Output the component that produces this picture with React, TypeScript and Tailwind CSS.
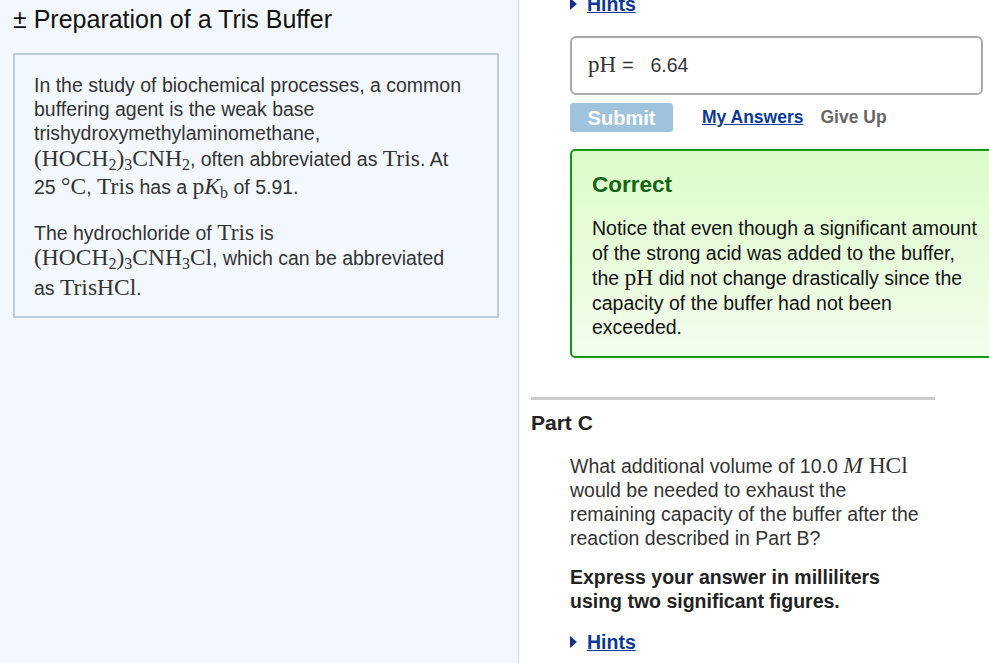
import { type ReactNode } from "react";

function M({ children }: { children: ReactNode }) {
	return <span className="whitespace-nowrap font-['Liberation_Serif',serif] text-[23.5px]">{children}</span>;
}

function Sub({ children }: { children: ReactNode }) {
	return <sub className="text-[16px]">{children}</sub>;
}

function HintsLink({ className = "" }: { className?: string }) {
	return (
		<div className={`flex items-center gap-[10px] ${className}`}>
			<svg width="7" height="12" viewBox="0 0 7 12">
				<path d="M0 0 L7 6 L0 12 Z" fill="#1c2c8c" />
			</svg>
			<a className="text-[19.5px] font-bold leading-[20px] text-[#0b3a96] underline" href="#">
				Hints
			</a>
		</div>
	);
}

export default function App() {
	return (
		<div className="flex h-[663px] w-[989px] overflow-hidden bg-white font-['Liberation_Sans',Arial,sans-serif]">
			<aside className="h-full w-[519px] shrink-0 border-r border-[#c8d8ea] bg-[#f3f8ff] pl-[13px]">
				<h1 className="pt-[4px] text-[25px] leading-[30px] text-[#111]">± Preparation of a Tris Buffer</h1>
				<div className="mt-[19px] w-[486px] border-2 border-[#bccfe1] pb-[12px] pl-[19px] pt-[19px] text-[19.5px] text-[#333]">
					<div className="flex flex-col">
						<span className="flex h-[24px] items-center whitespace-nowrap">In the study of biochemical processes, a common</span>
						<span className="flex h-[24px] items-center whitespace-nowrap">buffering agent is the weak base</span>
						<span className="flex h-[24px] items-center whitespace-nowrap">trishydroxymethylaminomethane,</span>
						<span className="h-[24px] whitespace-nowrap leading-[24px]">
							<M>
								(HOCH<Sub>2</Sub>)<Sub>3</Sub>CNH<Sub>2</Sub>
							</M>
							, often abbreviated as <M>Tris</M>. At
						</span>
						<span className="h-[32px] whitespace-nowrap leading-[32px]">
							25 <M>°C</M>, <M>Tris</M> has a{" "}
							<M>
								p<i>K</i>
								<Sub>b</Sub>
							</M>{" "}
							of 5.91.
						</span>
					</div>
					<div className="mt-[18px] flex flex-col">
						<span className="h-[24px] whitespace-nowrap leading-[24px]">
							The hydrochloride of <M>Tris</M> is
						</span>
						<span className="h-[26px] whitespace-nowrap leading-[26px]">
							<M>
								(HOCH<Sub>2</Sub>)<Sub>3</Sub>CNH<Sub>3</Sub>Cl
							</M>
							, which can be abbreviated
						</span>
						<span className="h-[34px] whitespace-nowrap leading-[34px]">
							as <M>TrisHCl</M>.
						</span>
					</div>
				</div>
			</aside>

			<main className="min-w-0 flex-1 pl-[12px]">
				<div className="pl-[39px]">
					<HintsLink className="-mt-[6px] h-[20px]" />
					<div className="mt-[22px] flex h-[59px] w-[413px] items-center rounded-[6px] border-2 border-[#aaaaaa] pl-[16px] text-[#333]">
						<span className="font-['Liberation_Serif',serif] text-[23px]">pH</span>
						<span className="ml-[6px] text-[19.5px]">=</span>
						<span className="ml-[17px] text-[19.5px]">6.64</span>
					</div>
					<div className="mt-[8px] flex items-center">
						<button
							type="button"
							className="h-[29px] w-[103px] rounded-[3px] bg-[#9fc3dd] text-[20px] font-bold text-white"
						>
							Submit
						</button>
						<a href="#" className="ml-[29px] text-[17.5px] font-bold text-[#0b3a96] underline">
							My Answers
						</a>
						<span className="ml-[17px] text-[17.5px] font-bold text-[#666]">Give Up</span>
					</div>
					<div className="mt-[17px] h-[209px] w-[440px] rounded-[5px] border-2 border-[#169816] bg-gradient-to-b from-[#dcfbc9] to-[#f3fdec] pl-[20px] pt-[20px]">
						<div className="text-[22.5px] font-bold leading-[28px] text-[#136413]">Correct</div>
						<p className="mt-[17px] whitespace-nowrap text-[19.5px] leading-[24.5px] text-[#111]">
							Notice that even though a significant amount
							<br />
							of the strong acid was added to the buffer,
							<br />
							the <M>pH</M> did not change drastically since the
							<br />
							capacity of the buffer had not been
							<br />
							exceeded.
						</p>
					</div>
				</div>

				<div className="mt-[39px] h-[3px] w-[404px] bg-[#cccccc]" />
				<h2 className="mt-[11px] text-[21px] font-bold leading-[24px] text-[#222]">Part C</h2>
				<div className="pl-[39px]">
					<p className="mt-[18px] whitespace-nowrap text-[19.5px] leading-[24px] text-[#333]">
						What additional volume of 10.0{" "}
						<M>
							<i>M</i> HCl
						</M>
						<br />
						would be needed to exhaust the
						<br />
						remaining capacity of the buffer after the
						<br />
						reaction described in Part B?
					</p>
					<p className="mt-[15px] whitespace-nowrap text-[19.5px] font-bold leading-[24px] text-[#222]">
						Express your answer in milliliters
						<br />
						using two significant figures.
					</p>
					<HintsLink className="mt-[19px]" />
				</div>
			</main>
		</div>
	);
}
